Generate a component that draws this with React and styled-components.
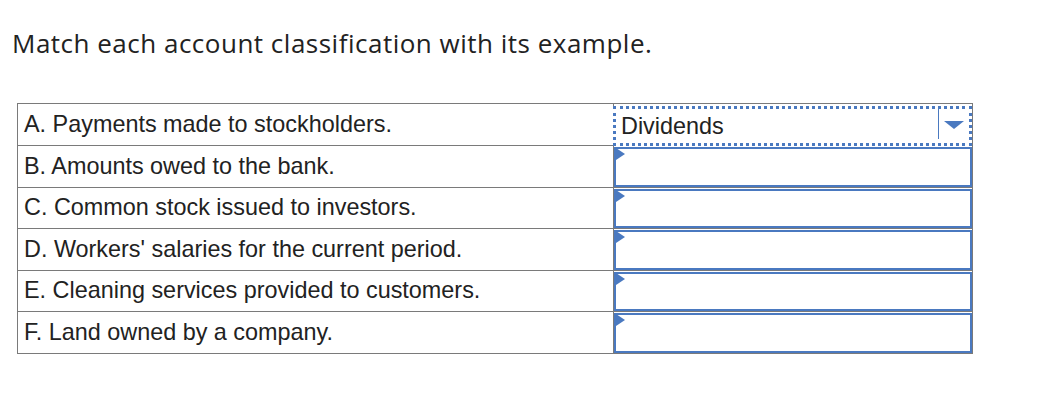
import React from 'react';
import styled, { createGlobalStyle } from 'styled-components';

const GlobalStyle = createGlobalStyle`
  html, body {
    margin: 0;
    padding: 0;
    background: #fff;
  }
  * {
    box-sizing: border-box;
  }
`;

const Page = styled.div`
  width: 1058px;
  height: 418px;
  padding: 26px 0 0 12px;
  background: #fff;
`;

const Title = styled.h1`
  margin: 0;
  font-family: "Open Sans", Lato, sans-serif;
  font-weight: 400;
  font-size: 26px;
  letter-spacing: 0.5px;
  line-height: 34px;
  color: #222;
`;

const Table = styled.div`
  margin: 43px 0 0 5px;
  width: 956px;
  border: 1px solid #7a7a7a;
`;

const Row = styled.div`
  display: flex;
  height: ${(p) => (p.$first ? '41px' : '41.5px')};
  border-top: ${(p) => (p.$first ? 'none' : '1px solid #7a7a7a')};
`;

const Prompt = styled.div`
  width: 596px;
  display: flex;
  align-items: center;
  padding-left: 6px;
  border-right: 1px solid #7a7a7a;
  font-family: "Liberation Sans", Arial, sans-serif;
  font-size: 23.4px;
  color: #222;
`;

const AnswerCell = styled.div`
  flex: 1;
  padding: ${(p) => (p.$select ? '2px 0 0 0' : '1px 0 0 0')};
  position: relative;
`;

const Select = styled.div`
  position: relative;
  z-index: 1;
  margin-left: -1px;
  height: 40px;
  display: flex;
  align-items: stretch;
  border: 3px dotted #4a79c0;
  background: #fff;
`;

const Value = styled.div`
  flex: 1;
  display: flex;
  align-items: center;
  padding-left: 5px;
  font-family: "Liberation Sans", Arial, sans-serif;
  font-size: 23.4px;
  color: #222;
`;

const Arrow = styled.div`
  width: 31px;
  margin-bottom: 4px;
  border-left: 1px solid #4a79c0;
  display: flex;
  align-items: center;
  justify-content: center;

  &::after {
    content: '';
    display: block;
    margin-top: 2px;
    border-left: 10px solid transparent;
    border-right: 10px solid transparent;
    border-top: 8px solid #4a79c0;
  }
`;

const DropBox = styled.div`
  position: relative;
  height: 100%;
  border: 2px solid #4a79c0;
  background: #fff;

  &::before {
    content: '';
    position: absolute;
    top: -1px;
    left: 0;
    border-top: 6px solid transparent;
    border-bottom: 6px solid transparent;
    border-left: 9px solid #4a79c0;
  }
`;

const items = [
  { prompt: 'A. Payments made to stockholders.', answer: 'Dividends' },
  { prompt: 'B. Amounts owed to the bank.' },
  { prompt: 'C. Common stock issued to investors.' },
  { prompt: "D. Workers' salaries for the current period." },
  { prompt: 'E. Cleaning services provided to customers.' },
  { prompt: 'F. Land owned by a company.' },
];

export default function App() {
  return (
    <>
      <GlobalStyle />
      <Page>
        <Title>Match each account classification with its example.</Title>
        <Table>
          {items.map((item, i) => (
            <Row key={item.prompt} $first={i === 0}>
              <Prompt>{item.prompt}</Prompt>
              <AnswerCell $select={!!item.answer}>
                {item.answer ? (
                  <Select>
                    <Value>{item.answer}</Value>
                    <Arrow />
                  </Select>
                ) : (
                  <DropBox />
                )}
              </AnswerCell>
            </Row>
          ))}
        </Table>
      </Page>
    </>
  );
}
